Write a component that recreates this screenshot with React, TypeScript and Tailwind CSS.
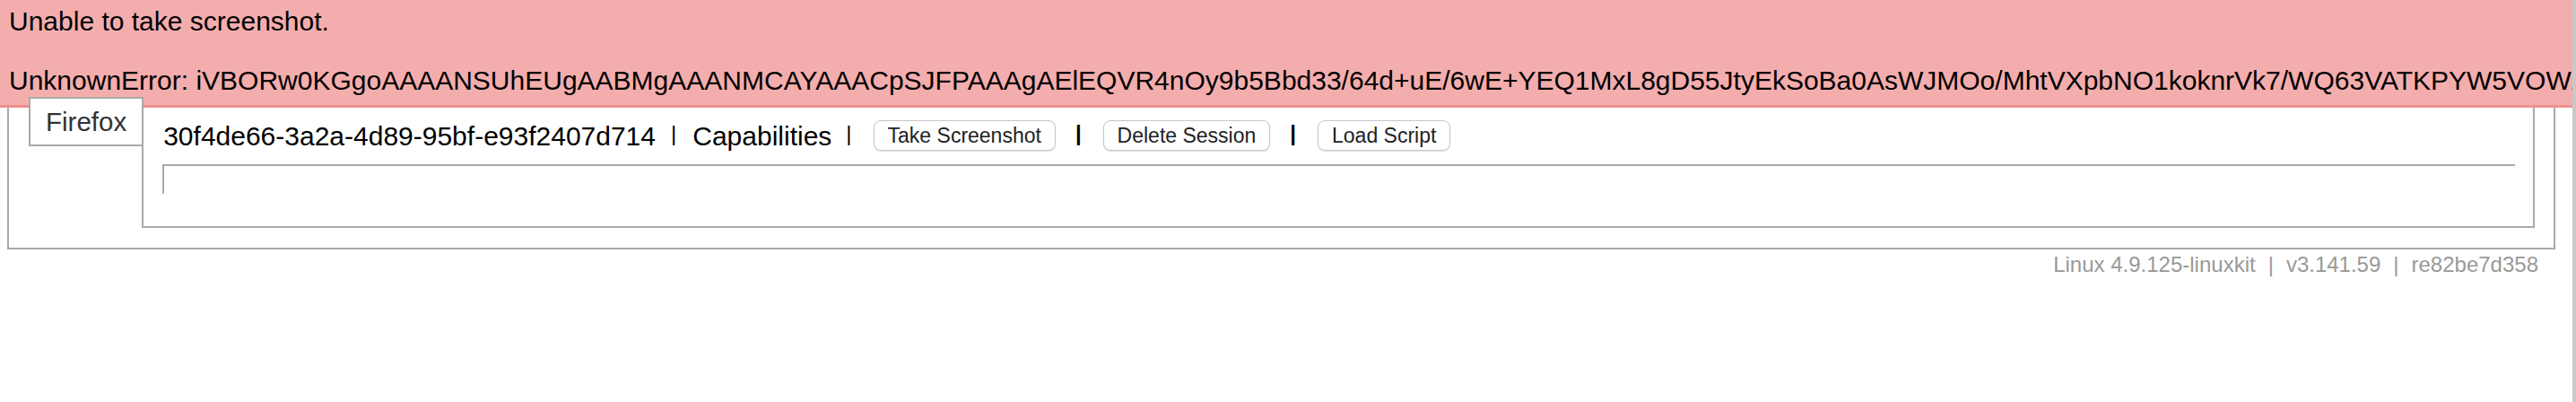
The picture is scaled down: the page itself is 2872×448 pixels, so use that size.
import React from 'react';

const errorText =
  'UnknownError: iVBORw0KGgoAAAANSUhEUgAABMgAAANMCAYAAACpSJFPAAAgAElEQVR4nOy9b5Bbd33/64d+uE/6wE+YEQ1MxL8gD55JtyEkSoBa0AsWJMOo/MhtVXpbNO1koknrVk7/WQ63VATKPYW5VOWZ';

function Sep({ bold, className }: { bold?: boolean; className: string }) {
  return (
    <span className={`text-[24px] leading-none -mt-[5px] text-black ${bold ? 'font-bold' : 'font-normal'} ${className}`}>|</span>
  );
}

function Btn({ label }: { label: string }) {
  return (
    <button className="h-[34px] px-[15px] bg-white border border-[#c6c6c6] rounded-[8px] shadow-[0_1px_1px_rgba(0,0,0,0.12)] text-[23px] leading-none text-[#222]">
      {label}
    </button>
  );
}

export default function App() {
  return (
    <div className="flex w-[2872px] h-[448px] bg-white overflow-hidden font-['Liberation_Sans',Arial,sans-serif]">
      <div className="relative flex-1 min-w-0">
        {/* error banner */}
        <div className="absolute top-0 left-0 right-0 z-10 bg-[#f4adad] border-b-[3px] border-[#ef8e8e] pt-[7px] pb-[11px] pl-[10px] overflow-hidden whitespace-nowrap text-[30px] leading-[33px] text-black">
          <div>Unable to take screenshot.</div>
          <div>&nbsp;</div>
          <div>{errorText}</div>
        </div>

        <div className="mt-[96px] ml-[8px] mr-[19px] border-2 border-[#aaa] pt-[10px] pl-[22px] pr-[21px] pb-[22px]">
          <div className="flex items-start">
            <div className="relative z-20 bg-white border-2 border-[#aaa] px-[17px] pt-[8px] pb-[7px] text-[29.5px] leading-[36px] text-[#333]">
              Firefox
            </div>
            <div className="flex-1 -ml-[2px] border-2 border-[#aaa] pt-[24px] pl-[22px] pr-[20px] pb-[36px]">
              <div className="flex items-center h-[34px] text-[30px] text-black">
                <span>30f4de66-3a2a-4d89-95bf-e93f2407d714</span>
                <Sep className="ml-[17px] mr-[18px]" />
                <span>Capabilities</span>
                <Sep className="ml-[16px] mr-[24px]" />
                <Btn label="Take Screenshot" />
                <Sep bold className="ml-[22px] mr-[24px]" />
                <Btn label="Delete Session" />
                <Sep bold className="ml-[22px] mr-[24px]" />
                <Btn label="Load Script" />
              </div>
              <div className="mt-[15px] -ml-[1px] h-[33px] border-t-2 border-l-2 border-[#aaa]" />
            </div>
          </div>
        </div>

        <div className="mt-[3px] pr-[38px] flex justify-end text-[24px] leading-[28px] text-[#999]">
          <span>Linux 4.9.125-linuxkit</span>
          <span className="mx-[14px]">|</span>
          <span>v3.141.59</span>
          <span className="mx-[14px]">|</span>
          <span>re82be7d358</span>
        </div>
      </div>
      <div className="w-[4px] bg-[#c8c8c8]" />
    </div>
  );
}
